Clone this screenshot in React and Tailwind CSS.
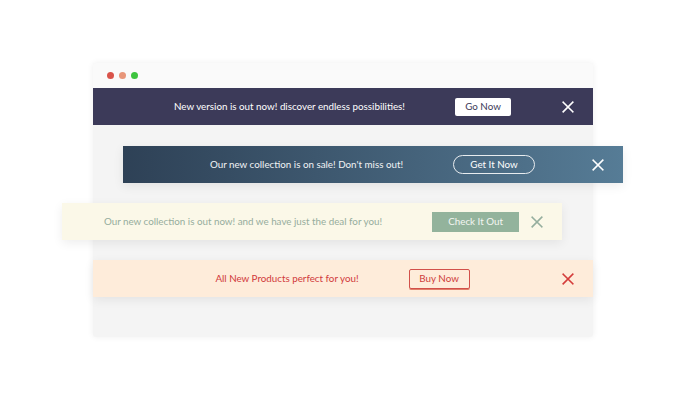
import React from "react";

function XIcon({ color }) {
  return (
    <svg width="12" height="12" viewBox="0 0 12 12" className="block">
      <path d="M1.2 1.2L10.8 10.8M10.8 1.2L1.2 10.8" stroke={color} strokeWidth="1.6" strokeLinecap="square" />
    </svg>
  );
}

function Banner({ className, text, textClass, button, xColor }) {
  return (
    <div className={"relative flex h-[37px] w-[500px] items-center justify-center gap-[50px] " + className}>
      <span className={"text-[9.8px] leading-none " + textClass}>{text}</span>
      {button}
      <div className="absolute right-[19px] top-1/2 -translate-y-1/2">
        <XIcon color={xColor} />
      </div>
    </div>
  );
}

export default function App() {
  return (
    <div
      className="flex h-[400px] w-[685px] items-center justify-center bg-white"
      style={{ fontFamily: "Lato, 'Open Sans', sans-serif" }}
    >
      <div className="flex h-[274px] w-[500px] flex-col rounded-[3px] bg-[#f4f4f4] shadow-[0_0_6px_rgba(0,0,0,0.07)]">
        <div className="flex h-[25px] items-center gap-[5px] rounded-t-[3px] bg-[#fafafa] pl-[14px]">
          <span className="h-[7px] w-[7px] rounded-full bg-[#d9534a]" />
          <span className="h-[7px] w-[7px] rounded-full bg-[#e8967a]" />
          <span className="h-[7px] w-[7px] rounded-full bg-[#3ec43f]" />
        </div>
        <Banner
          className="bg-[#3c3a59]"
          text="New version is out now! discover endless possibilities!"
          textClass="text-white"
          xColor="#ffffff"
          button={
            <button className="flex h-[18px] w-[56px] items-center justify-center rounded-[2px] bg-white text-[9.8px] leading-none text-[#3c3a59]">
              Go Now
            </button>
          }
        />
        <div className="flex flex-col gap-[20px] pt-[21px]">
          <Banner
            className="translate-x-[30px] bg-gradient-to-r from-[#2e4156] to-[#567c96] shadow-[0_3px_10px_rgba(0,0,0,0.08)]"
            text="Our new collection is on sale! Don't miss out!"
            textClass="text-[#f1f3f5]"
            xColor="#ffffff"
            button={
              <button className="flex h-[19px] w-[82px] items-center justify-center rounded-full border border-[#e8ecef] text-[9.8px] leading-none text-white">
                Get It Now
              </button>
            }
          />
          <Banner
            className="-translate-x-[31px] bg-[#fbf8e8] shadow-[0_3px_10px_rgba(0,0,0,0.07)]"
            text="Our new collection is out now! and we have just the deal for you!"
            textClass="text-[#96ad9d]"
            xColor="#95ae9e"
            button={
              <button className="flex h-[20px] w-[87px] items-center justify-center bg-[#93b39c] text-[9.8px] leading-none text-[#f3f6f2]">
                Check It Out
              </button>
            }
          />
          <Banner
            className="bg-[#feecda] shadow-[0_3px_10px_rgba(0,0,0,0.07)]"
            text="All New Products perfect for you!"
            textClass="text-[#d1393a]"
            xColor="#d43c3a"
            button={
              <button className="flex h-[20px] w-[61px] items-center justify-center rounded-[2px] border border-[#d2504a] text-[9.8px] leading-none text-[#cf3d3a] shadow-[0_1px_0_#e0806a]">
                Buy Now
              </button>
            }
          />
        </div>
      </div>
    </div>
  );
}
